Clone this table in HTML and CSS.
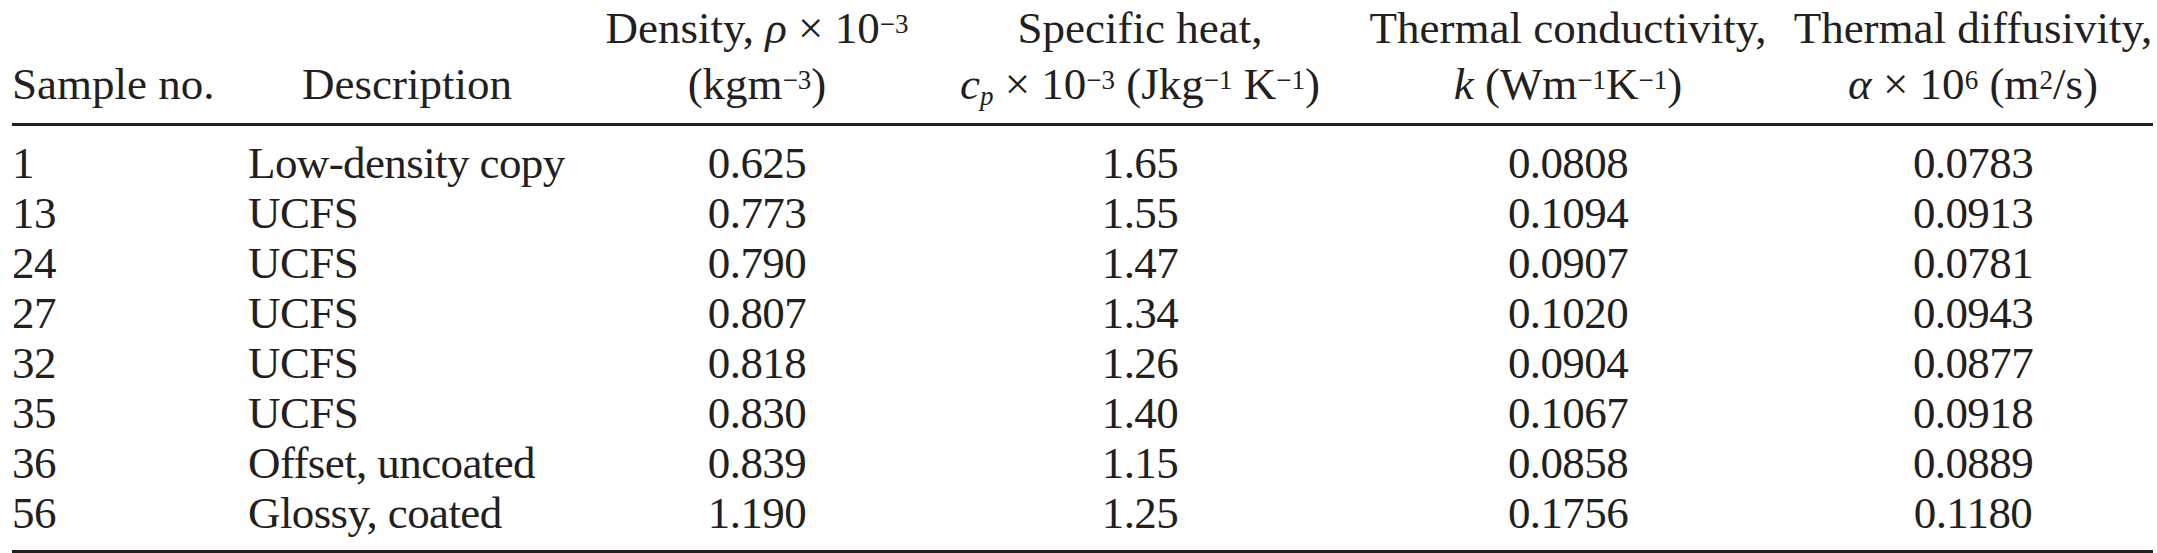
FILE: index.html
```html
<!DOCTYPE html>
<html lang="en">
<head>
<meta charset="utf-8">
<title>Thermal properties of paper samples</title>
<link rel="stylesheet" href="styles.css">
</head>
<body>
<table class="data">
  <colgroup>
    <col class="c-no">
    <col class="c-desc">
    <col class="c-rho">
    <col class="c-cp">
    <col class="c-k">
    <col class="c-alpha">
  </colgroup>
  <thead>
    <tr>
      <th class="h-left">Sample no.</th>
      <th class="h-desc">Description</th>
      <th><div>Density, <i>ρ</i> × 10<sup>−3</sup></div><div>(kgm<sup>−3</sup>)</div></th>
      <th><div>Specific heat,</div><div><i>c</i><sub><i>p</i></sub> × 10<sup>−3</sup> (Jkg<sup>−1</sup> K<sup>−1</sup>)</div></th>
      <th><div>Thermal conductivity,</div><div><i>k</i> (Wm<sup>−1</sup>K<sup>−1</sup>)</div></th>
      <th><div>Thermal diffusivity,</div><div><i>α</i> × 10<sup>6</sup> (m<sup>2</sup>/s)</div></th>
    </tr>
  </thead>
  <tbody>
    <tr><td>1</td><td>Low-density copy</td><td>0.625</td><td>1.65</td><td>0.0808</td><td>0.0783</td></tr>
    <tr><td>13</td><td>UCFS</td><td>0.773</td><td>1.55</td><td>0.1094</td><td>0.0913</td></tr>
    <tr><td>24</td><td>UCFS</td><td>0.790</td><td>1.47</td><td>0.0907</td><td>0.0781</td></tr>
    <tr><td>27</td><td>UCFS</td><td>0.807</td><td>1.34</td><td>0.1020</td><td>0.0943</td></tr>
    <tr><td>32</td><td>UCFS</td><td>0.818</td><td>1.26</td><td>0.0904</td><td>0.0877</td></tr>
    <tr><td>35</td><td>UCFS</td><td>0.830</td><td>1.40</td><td>0.1067</td><td>0.0918</td></tr>
    <tr><td>36</td><td>Offset, uncoated</td><td>0.839</td><td>1.15</td><td>0.0858</td><td>0.0889</td></tr>
    <tr><td>56</td><td>Glossy, coated</td><td>1.190</td><td>1.25</td><td>0.1756</td><td>0.1180</td></tr>
  </tbody>
</table>
</body>
</html>
```

FILE: styles.css
```css
html, body {
  margin: 0;
  padding: 0;
  background: #ffffff;
}

body {
  color: #231f20;
  font-family: "Liberation Serif", "Times New Roman", serif;
}

.data {
  margin-left: 12px;
  width: 2141px;
  table-layout: fixed;
  border-collapse: separate;
  border-spacing: 0;
  font-size: 45px;
}

.c-no { width: 236px; }
.c-desc { width: 329px; }
.c-rho { width: 360px; }
.c-cp { width: 406px; }
.c-k { width: 450px; }
.c-alpha { width: 360px; }

.data th,
.data td {
  padding: 0;
  white-space: nowrap;
  font-weight: normal;
}

.data th {
  line-height: 56px;
  vertical-align: bottom;
  text-align: center;
  padding-bottom: 11px;
  border-bottom: 3px solid #231f20;
}

.data th.h-left {
  text-align: left;
}

.data th.h-desc {
  padding-right: 11px;
}

.data td {
  line-height: 50px;
  text-align: center;
  vertical-align: baseline;
  letter-spacing: -0.6px;
}

.data td:nth-child(1),
.data td:nth-child(2) {
  text-align: left;
}

.data tbody tr:first-child td {
  padding-top: 12px;
}

.data tbody tr:last-child td {
  padding-bottom: 12px;
  border-bottom: 3px solid #231f20;
}

.data sup {
  font-size: 0.6em;
  line-height: 0;
  vertical-align: baseline;
  position: relative;
  top: -0.38em;
}

.data sub {
  font-size: 0.6em;
  line-height: 0;
  vertical-align: baseline;
  position: relative;
  top: 0.22em;
}
```
